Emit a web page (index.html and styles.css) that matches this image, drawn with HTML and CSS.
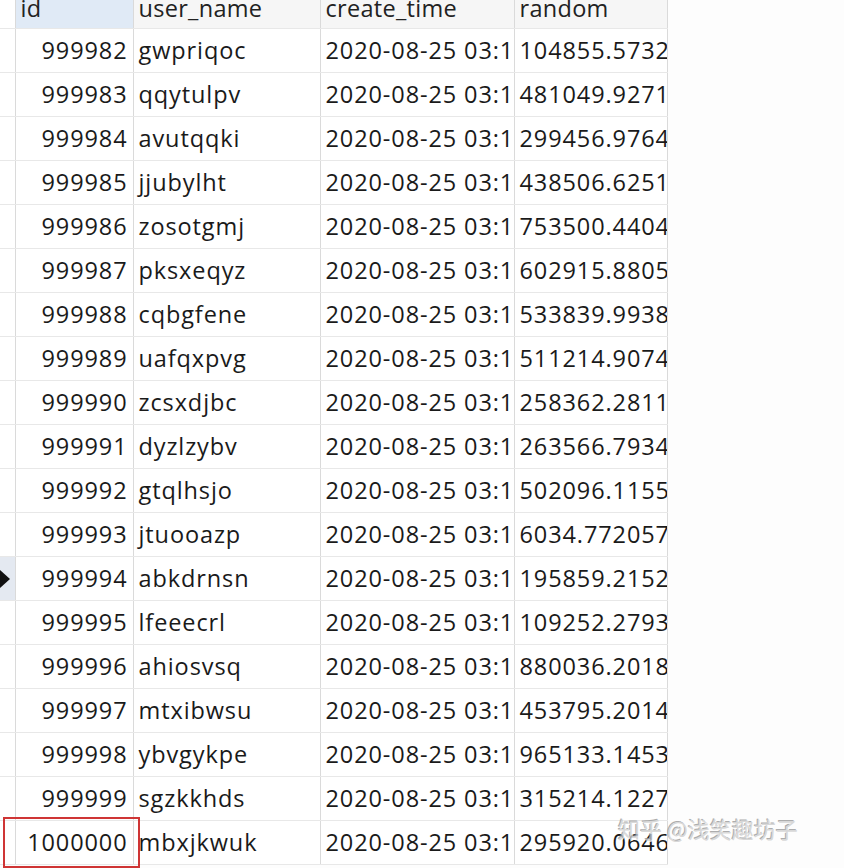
FILE: index.html
```html
<!DOCTYPE html>
<html lang="zh">
<head>
<meta charset="utf-8">
<title>Table</title>
<link rel="stylesheet" href="styles.css">
</head>
<body>
<div class="wrap">
  <table class="grid">
    <colgroup>
      <col class="c-gut"><col class="c-id"><col class="c-name"><col class="c-time"><col class="c-rand">
    </colgroup>
    <thead>
      <tr>
        <th class="gut"></th>
        <th class="sel">id</th>
        <th>user_name</th>
        <th>create_time</th>
        <th>random</th>
      </tr>
    </thead>
    <tbody>
      <tr><td class="gut"></td><td class="num">999982</td><td>gwpriqoc</td><td>2020-08-25 03:10:21</td><td>104855.573261</td></tr>
      <tr><td class="gut"></td><td class="num">999983</td><td>qqytulpv</td><td>2020-08-25 03:10:21</td><td>481049.927194</td></tr>
      <tr><td class="gut"></td><td class="num">999984</td><td>avutqqki</td><td>2020-08-25 03:10:21</td><td>299456.976452</td></tr>
      <tr><td class="gut"></td><td class="num">999985</td><td>jjubylht</td><td>2020-08-25 03:10:21</td><td>438506.625113</td></tr>
      <tr><td class="gut"></td><td class="num">999986</td><td>zosotgmj</td><td>2020-08-25 03:10:21</td><td>753500.440421</td></tr>
      <tr><td class="gut"></td><td class="num">999987</td><td>pksxeqyz</td><td>2020-08-25 03:10:21</td><td>602915.880512</td></tr>
      <tr><td class="gut"></td><td class="num">999988</td><td>cqbgfene</td><td>2020-08-25 03:10:21</td><td>533839.993817</td></tr>
      <tr><td class="gut"></td><td class="num">999989</td><td>uafqxpvg</td><td>2020-08-25 03:10:21</td><td>511214.907465</td></tr>
      <tr><td class="gut"></td><td class="num">999990</td><td>zcsxdjbc</td><td>2020-08-25 03:10:21</td><td>258362.281133</td></tr>
      <tr><td class="gut"></td><td class="num">999991</td><td>dyzlzybv</td><td>2020-08-25 03:10:21</td><td>263566.793411</td></tr>
      <tr><td class="gut"></td><td class="num">999992</td><td>gtqlhsjo</td><td>2020-08-25 03:10:21</td><td>502096.115521</td></tr>
      <tr><td class="gut"></td><td class="num">999993</td><td>jtuooazp</td><td>2020-08-25 03:10:21</td><td>6034.7720571</td></tr>
      <tr class="current"><td class="gut"><span class="arrow"></span></td><td class="num">999994</td><td>abkdrnsn</td><td>2020-08-25 03:10:21</td><td>195859.215243</td></tr>
      <tr><td class="gut"></td><td class="num">999995</td><td>lfeeecrl</td><td>2020-08-25 03:10:21</td><td>109252.279362</td></tr>
      <tr><td class="gut"></td><td class="num">999996</td><td>ahiosvsq</td><td>2020-08-25 03:10:21</td><td>880036.201847</td></tr>
      <tr><td class="gut"></td><td class="num">999997</td><td>mtxibwsu</td><td>2020-08-25 03:10:21</td><td>453795.201455</td></tr>
      <tr><td class="gut"></td><td class="num">999998</td><td>ybvgykpe</td><td>2020-08-25 03:10:21</td><td>965133.145317</td></tr>
      <tr><td class="gut"></td><td class="num">999999</td><td>sgzkkhds</td><td>2020-08-25 03:10:21</td><td>315214.122744</td></tr>
      <tr><td class="gut"></td><td class="num">1000000</td><td>mbxjkwuk</td><td>2020-08-25 03:10:21</td><td>295920.064628</td></tr>
    </tbody>
  </table>
  <div class="mark-box"></div>
  <div class="watermark">知乎 @浅笑趣坊子</div>
</div>
</body>
</html>
```
FILE: styles.css
```css
html, body {
  margin: 0;
  padding: 0;
  background: #fdfdfd;
  overflow: hidden;
}
.wrap {
  position: relative;
  width: 844px;
  height: 868px;
}
.grid {
  border-collapse: collapse;
  table-layout: fixed;
  width: 667px;
  font-family: "Open Sans", "Noto Sans", sans-serif;
  font-size: 23.5px;
  letter-spacing: 0.9px;
  color: #1a1a1a;
  background: #fff;
}
.c-gut { width: 15px; }
.c-id { width: 118px; }
.c-name { width: 187px; }
.c-time { width: 194px; }
.c-rand { width: 153px; }

.grid th, .grid td {
  white-space: nowrap;
  overflow: hidden;
  text-overflow: clip;
  border-right: 1px solid #dadada;
  border-bottom: 1px solid #e8e8e8;
  padding: 0 0 0 5px;
}
.grid th {
  height: 28px;
  line-height: 16px;
  vertical-align: top;
  text-align: left;
  font-weight: normal;
  background: #f6f6f6;
  color: #222;
  letter-spacing: 0.3px;
}
.grid th.sel {
  background: #e0eaf6;
}
.grid th.gut {
  background: #fff;
}
.grid td {
  height: 43px;
  line-height: 43px;
}
.grid .gut {
  padding: 0;
  position: relative;
  background: #fff;
}
.grid td.num {
  text-align: right;
  padding: 0 5px 0 0;
}
.grid tr.current td.gut {
  background: #e4e9f1;
}
.arrow {
  position: absolute;
  left: 0;
  top: 13px;
  width: 0;
  height: 0;
  border-top: 9px solid transparent;
  border-bottom: 9px solid transparent;
  border-left: 10px solid #111;
}
.mark-box {
  position: absolute;
  left: 3px;
  top: 817px;
  width: 133px;
  height: 47px;
  border: 2px solid #cf3535;
}
.watermark {
  position: absolute;
  left: 618px;
  top: 812px;
  font-family: "Noto Sans CJK SC", sans-serif;
  font-size: 22px;
  color: #d0d0d0;
  text-shadow: 1px 1px 0 #fff, -1px -1px 0 #9a9a9a;
  opacity: 0.8;
  white-space: nowrap;
}
```
